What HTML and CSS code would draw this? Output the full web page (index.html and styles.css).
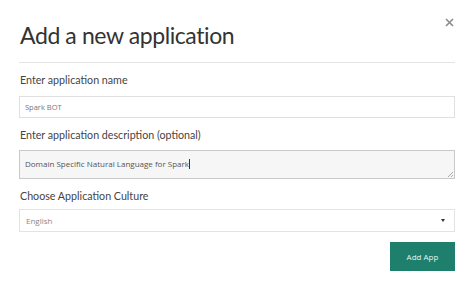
FILE: index.html
```html
<!DOCTYPE html>
<html lang="en">
<head>
    <meta charset="UTF-8">
    <meta name="viewport" content="width=device-width, initial-scale=1.0">
    <title>Add a new application</title>
    <link rel="stylesheet" href="styles.css">
</head>
<body>
    <div class="app-dialog">
        <div class="dialog-header">
            <h2>Add a new application</h2>
            <button class="close-button" aria-label="Close">
                <svg width="9" height="9" viewBox="0 0 9 9">
                    <path d="M1 1 L8 8 M8 1 L1 8" stroke="#8a8a8a" stroke-width="1.6" fill="none"/>
                </svg>
            </button>
        </div>
        <div class="dialog-body">
            <label for="app-name">Enter application name</label>
            <input type="text" id="app-name" value="Spark BOT">

            <label for="app-desc">Enter application description (optional)</label>
            <div class="desc-box" id="app-desc">Domain Specific Natural Language for Spark<span class="caret"></span></div>

            <label for="app-culture">Choose Application Culture</label>
            <div class="select-box" id="app-culture">
                <span>English</span>
                <span class="select-arrow"></span>
            </div>

            <div class="dialog-footer">
                <button class="add-button">Add App</button>
            </div>
        </div>
    </div>
</body>
</html>
```

FILE: styles.css
```css
body {
    margin: 0;
    background-color: white;
    font-family: "Open Sans", "Noto Sans", sans-serif;
    color: #333;
}
.app-dialog {
    padding: 0 19px 0 19px;
}
.dialog-header {
    display: flex;
    justify-content: space-between;
    align-items: flex-start;
    border-bottom: 1px solid #e3e3e3;
    height: 62px;
}
.dialog-header h2 {
    margin: 21px 0 0 1px;
    font-family: Lato, sans-serif;
    font-weight: 400;
    font-size: 23px;
    letter-spacing: -0.4px;
    color: #333;
}
.close-button {
    background: none;
    border: none;
    padding: 0;
    margin: 18px 1px 0 0;
    width: 9px;
    height: 9px;
    line-height: 0;
    cursor: pointer;
}
.dialog-body {
    display: flex;
    flex-direction: column;
}
.dialog-body label {
    font-family: Lato, sans-serif;
    font-size: 10.7px;
    color: #444;
    margin: 9px 0 0 1px;
    height: 16px;
    line-height: 16px;
}
.dialog-body input[type="text"] {
    margin-top: 8px;
    height: 22px;
    padding: 0 5px;
    border: 1px solid #e0e0e0;
    font-family: inherit;
    font-size: 7.5px;
    color: #777;
    box-sizing: border-box;
}
.desc-box {
    position: relative;
    margin-top: 7px;
    height: 29px;
    padding: 7px 5px 0 5px;
    border: 1px solid #c9c9c9;
    background-color: #f6f6f6;
    font-size: 8px;
    color: #555;
    box-sizing: border-box;
}
.caret {
    display: inline-block;
    width: 1px;
    height: 10px;
    background-color: #333;
    vertical-align: -2px;
}
.desc-box::after {
    content: "";
    position: absolute;
    right: 1px;
    bottom: 1px;
    width: 5px;
    height: 5px;
    background: linear-gradient(135deg, transparent 45%, #aaa 45%, #aaa 55%, transparent 55%, transparent 75%, #aaa 75%, #aaa 85%, transparent 85%);
}
.select-box {
    display: flex;
    justify-content: space-between;
    align-items: center;
    margin-top: 5px;
    height: 23px;
    padding: 0 9px 0 6px;
    border: 1px solid #e3e3e3;
    font-size: 8px;
    color: #888;
    box-sizing: border-box;
}
.select-arrow {
    width: 0;
    height: 0;
    border-left: 2px solid transparent;
    border-right: 2px solid transparent;
    border-top: 3px solid #333;
}
.dialog-footer {
    display: flex;
    justify-content: flex-end;
    margin-top: 10px;
}
.add-button {
    background-color: #1d7f6c;
    color: #e8f5f0;
    border: none;
    width: 65px;
    height: 29px;
    font-family: inherit;
    font-size: 8px;
    cursor: pointer;
}
```
